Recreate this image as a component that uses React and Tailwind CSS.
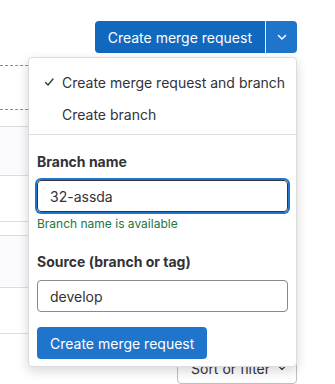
import React from 'react';

function Chevron({ className }) {
    return (
        <svg viewBox="0 0 16 16" className={className} fill="none" stroke="currentColor" strokeWidth="1.5" strokeLinecap="round" strokeLinejoin="round">
            <path d="M4.5 6.5 8 10l3.5-3.5" />
        </svg>
    );
}

function Check() {
    return (
        <svg viewBox="0 0 16 16" className="w-4 h-4 shrink-0" fill="none" stroke="#333238" strokeWidth="1.3" strokeLinecap="round" strokeLinejoin="round">
            <path d="M4.5 8.5 7 11l5-6" />
        </svg>
    );
}

export default function App() {
    return (
        <div className="relative w-[335px] h-[384px] overflow-hidden bg-white text-[#333238] font-['Inter',sans-serif]">
            {/* Top split button */}
            <div className="flex justify-end pt-[21px] pr-[38px]">
                <div className="flex h-[32px] rounded-[4px] overflow-hidden text-white text-[14px]">
                    <div className="flex items-center px-[13px] bg-[#1068bf] border-r border-[#e8eefa]">Create merge request</div>
                    <div className="flex items-center justify-center w-[31px] bg-[#1f75cb]">
                        <Chevron className="w-4 h-4" />
                    </div>
                </div>
            </div>

            {/* Background list */}
            <div className="mt-[12px] mr-[40px]">
                <div className="h-[44px] border-t border-dashed border-[#89888d]" />
                <div className="h-[17px] border-t border-dashed border-[#89888d]" />
                <div className="h-[49px] border-t border-[#dcdcde] bg-[#fbfafd]" />
                <div className="h-[46px] border-t border-[#dcdcde]" />
                <div className="h-[14px] border-t border-[#dcdcde]" />
                <div className="h-[52px] border-t border-[#dcdcde] bg-[#fbfafd]" />
                <div className="h-[46px] border-t border-[#dcdcde]" />
                <div className="border-t border-[#dcdcde]" />
            </div>
            <div className="flex justify-end pr-[38px] mt-[18px]">
                <div className="flex items-center w-[120px] h-[32px] pl-[13px] pr-[8px] rounded-[4px] border border-[#bfbfc3] text-[14px] text-[#333238] whitespace-nowrap">
                    <span className="flex-1">Sort or filter</span>
                    <Chevron className="w-3 h-3 shrink-0" />
                </div>
            </div>

            {/* Dropdown panel */}
            <div className="absolute left-[28px] top-[57px] w-[269px] h-[310px] rounded-[4px] border border-[#dcdcde] bg-white shadow-[0_4px_12px_rgba(5,5,6,0.16)] text-[14px]">
                <div className="pt-[8px]">
                    <div className="flex items-center h-[32px] pl-[12px] gap-[5px]">
                        <Check />
                        <span>Create merge request and branch</span>
                    </div>
                    <div className="flex items-center h-[32px] pl-[33px]">
                        <span>Create branch</span>
                    </div>
                </div>
                <div className="mt-[4px] border-t border-[#dcdcde]" />
                <div className="px-[8px] pt-[17px] pb-[8px]">
                    <div className="font-bold leading-[20px]">Branch name</div>
                    <div className="mt-[8px] flex items-center h-[32px] px-[12px] rounded-[4px] border border-[#333238] ring-2 ring-[#1f75cb]">32-assda</div>
                    <div className="mt-[4px] text-[12px] leading-[16px] text-[#217645]">Branch name is available</div>
                    <div className="mt-[20px] font-bold leading-[20px]">Source (branch or tag)</div>
                    <div className="mt-[8px] flex items-center h-[32px] px-[12px] rounded-[4px] border border-[#89888d]">develop</div>
                    <div className="mt-[15px] inline-flex items-center h-[32px] px-[13px] rounded-[4px] bg-[#1f75cb] text-white">Create merge request</div>
                </div>
            </div>
        </div>
    );
}
